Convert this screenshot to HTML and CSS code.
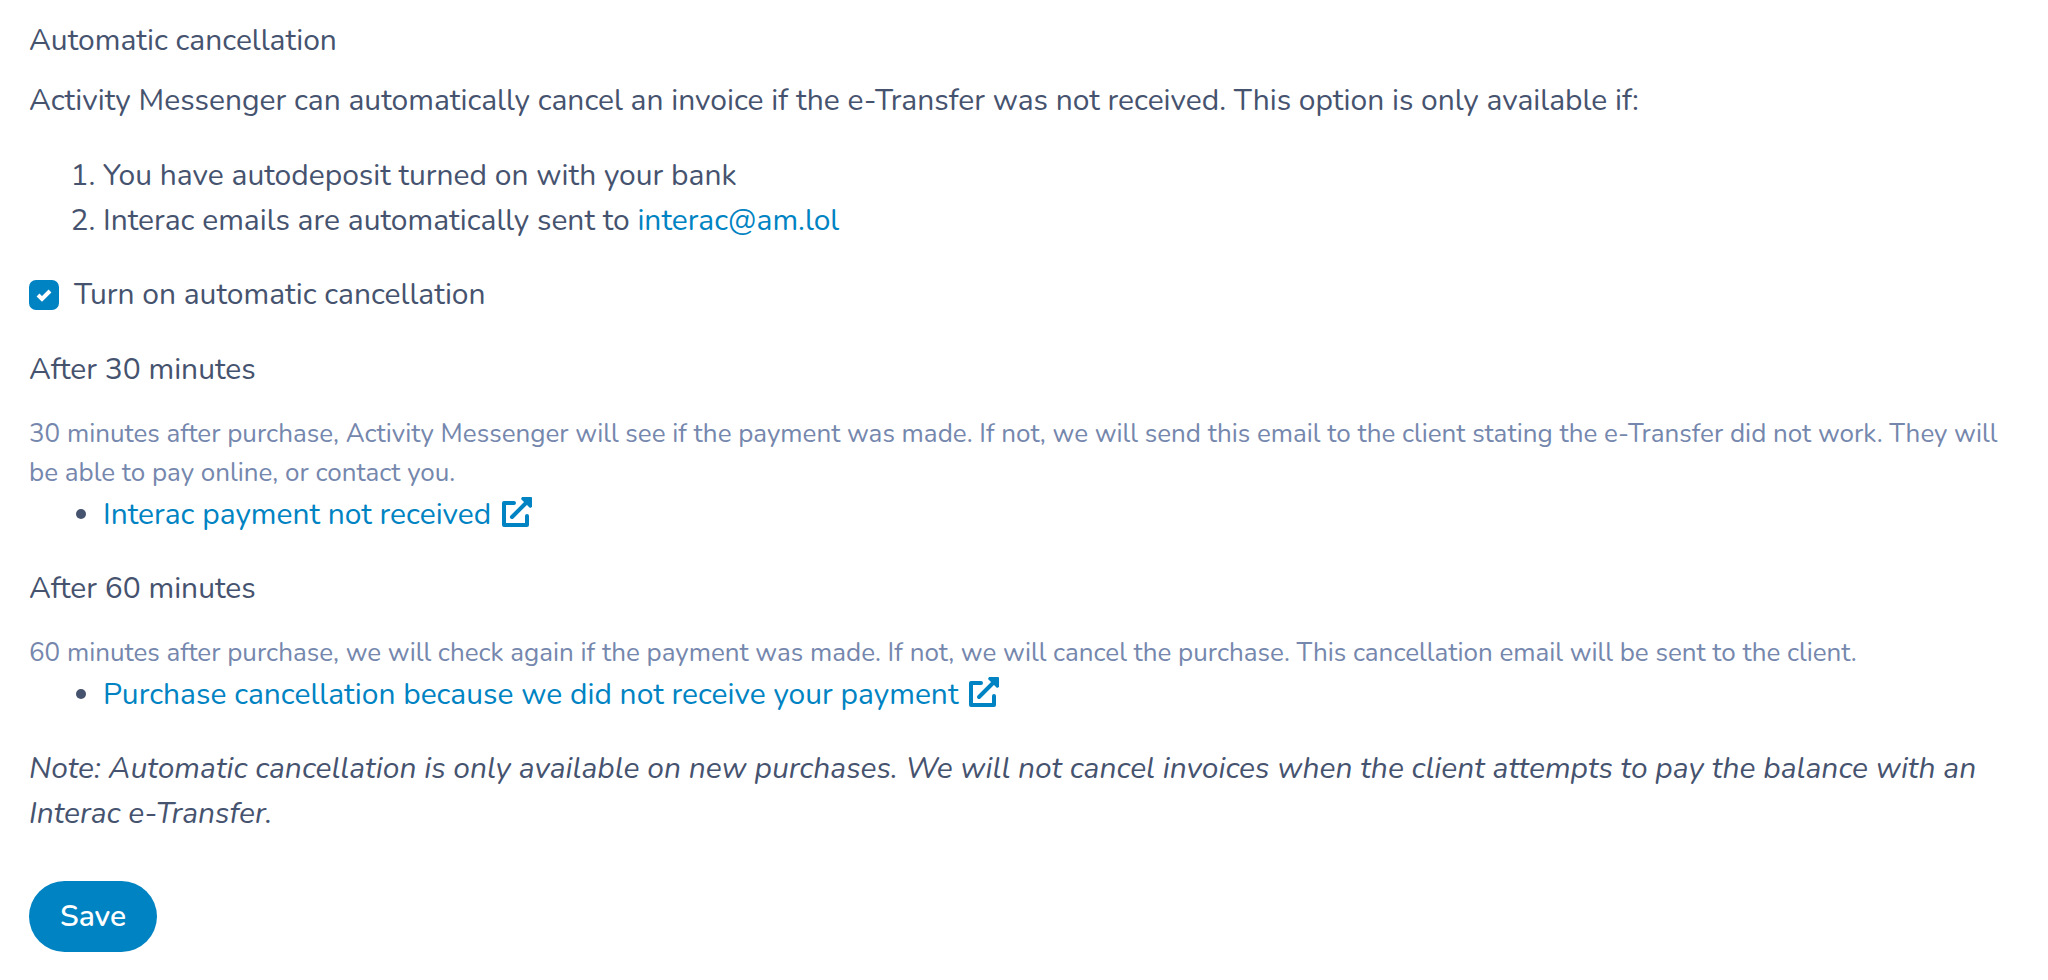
FILE: index.html
```html
<!DOCTYPE html>
<html lang="en">
  <head>
    <meta charset="UTF-8">
    <title>Automatic cancellation</title>
    <meta name="viewport" content="width=device-width, initial-scale=1">
    <link rel="stylesheet" href="styles.css">
  </head>
  <body>
    <form class="settings">
      <h2 class="title">Automatic cancellation</h2>
      <p class="intro">Activity Messenger can automatically cancel an invoice if the e-Transfer was not received. This option is only available if:</p>
      <ol class="list conditions">
        <li>You have autodeposit turned on with your bank</li>
        <li>Interac emails are automatically sent to <a href="mailto:interac@am.lol">interac@am.lol</a></li>
      </ol>
      <div class="toggle">
        <input type="checkbox" id="autoCancel" checked>
        <label for="autoCancel">Turn on automatic cancellation</label>
      </div>

      <h3 class="step">After 30 minutes</h3>
      <p class="help">30 minutes after purchase, Activity Messenger will see if the payment was made. If not, we will send this email to the client stating the e-Transfer did not work. They will be able to pay online, or contact you.</p>
      <ul class="list">
        <li><a href="#">Interac payment not received <svg class="external" viewBox="0 0 30 30" aria-hidden="true"><path class="line" d="M12 6H2V28H25V19M10 20L25 5"/><path class="head" d="M20 0H29Q30 0 30 1V10L28 11L19 2Z"/></svg></a></li>
      </ul>

      <h3 class="step">After 60 minutes</h3>
      <p class="help">60 minutes after purchase, we will check again if the payment was made. If not, we will cancel the purchase. This cancellation email will be sent to the client.</p>
      <ul class="list">
        <li><a href="#">Purchase cancellation because we did not receive your payment <svg class="external" viewBox="0 0 30 30" aria-hidden="true"><path class="line" d="M12 6H2V28H25V19M10 20L25 5"/><path class="head" d="M20 0H29Q30 0 30 1V10L28 11L19 2Z"/></svg></a></li>
      </ul>

      <p class="note">Note: Automatic cancellation is only available on new purchases. We will not cancel invoices when the client attempts to pay the balance with an Interac e-Transfer.</p>
      <button type="submit" class="save">Save</button>
    </form>
  </body>
</html>
```
FILE: styles.css
```css
* {
  box-sizing: border-box;
}

body {
  margin: 0;
  background: #fff;
  color: #46536f;
  font-family: Nunito, "Open Sans", sans-serif;
  font-size: 30px;
  line-height: 45px;
}

.settings {
  padding: 18px 29px;
}

h2, h3, p {
  margin: 0;
  font-size: 30px;
  font-weight: 400;
}

.title {
  margin-bottom: 15px;
}

a {
  color: #0083c2;
  text-decoration: none;
}

a:hover {
  text-decoration: underline;
}

.list {
  margin: 0 0 29px;
  padding-left: 74px;
}

.conditions {
  margin-top: 30px;
}

.toggle {
  display: flex;
  align-items: center;
  gap: 15px;
  margin-bottom: 30px;
}

.toggle input {
  appearance: none;
  width: 30px;
  height: 30px;
  margin: 0;
  border: 2px solid #0083c2;
  border-radius: 7px;
}

.toggle input:checked {
  background: #0083c2 url("data:image/svg+xml,%3Csvg xmlns='http://www.w3.org/2000/svg' viewBox='0 0 26 26'%3E%3Cpath d='M7 13l4 4 8-8' fill='none' stroke='white' stroke-width='4'/%3E%3C/svg%3E") center / 100%;
}

.step {
  margin-bottom: 22px;
}

.help {
  color: #7587ad;
  font-size: 26px;
  line-height: 39px;
}

.external {
  width: 30px;
  height: 30px;
  margin-left: 3px;
  vertical-align: -3px;
}

.external .line {
  fill: none;
  stroke: #0083c2;
  stroke-width: 4;
  stroke-linecap: round;
  stroke-linejoin: round;
}

.external .head {
  fill: #0083c2;
}

.note {
  font-style: italic;
}

.save {
  margin-top: 45px;
  padding: 13px 31px;
  border: none;
  border-radius: 36px;
  background: #0083c2;
  color: #fff;
  font: inherit;
  font-weight: 600;
  cursor: pointer;
}
```
